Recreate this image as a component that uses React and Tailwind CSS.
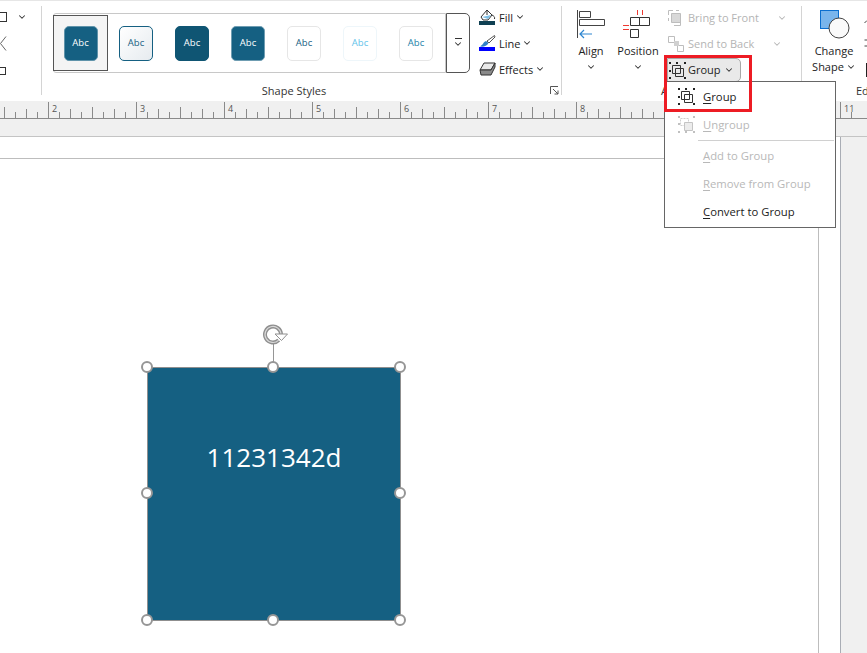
import { ChevronDown } from "lucide-react";

const styles = [
  { box: "bg-[#156082] border-[#5f93aa]", text: "text-white" },
  { box: "bg-gradient-to-br from-white to-[#e6ebef] border-[#156082]", text: "text-[#156082]" },
  { box: "bg-[#0f5573] border-[#0f5573]", text: "text-white" },
  { box: "bg-[#156082] border-[#6f9db2]", text: "text-white" },
  { box: "bg-white border-[#e6e6e6]", text: "text-[#156082]" },
  { box: "bg-white border-[#eef6fa]", text: "text-[#62c3ea]" },
  { box: "bg-white border-[#e6e6e6]", text: "text-[#1a7fa8]" },
];

const Chev = ({ className = "" }) => <ChevronDown className={`w-[10px] h-[10px] shrink-0 text-[#333] ${className}`} strokeWidth={2.5} />;

function GroupIcon() {
  return (
    <svg width="17" height="17" viewBox="0 0 17 17" fill="none" className="shrink-0">
      <path d="M3.5 3.5h8v8h-8z M6.5 6.5h8v8h-8z" stroke="#333" />
      {[[0, 0], [15, 0], [0, 15], [15, 15], [7, 0], [0, 8]].map(([x, y]) => (
        <rect key={`${x}-${y}`} x={x} y={y} width="2" height="2" fill="#222" />
      ))}
    </svg>
  );
}

function UngroupIcon() {
  return (
    <svg width="17" height="17" viewBox="0 0 17 17" fill="none" className="shrink-0">
      <path d="M2.5 2.5h8v7h-8z" stroke="#cfcfcf" strokeDasharray="2 1" />
      <path d="M6.5 6.5h8v8h-8z" fill="#ececec" stroke="#c4c4c4" />
      {[[0, 0], [15, 0], [0, 15], [15, 15], [0, 7], [7, 15]].map(([x, y]) => (
        <rect key={`${x}-${y}`} x={x} y={y} width="2" height="2" fill="#c0c0c0" />
      ))}
    </svg>
  );
}

const AlignIcon = () => (
  <svg width="30" height="29" viewBox="0 0 30 29" fill="none">
    <path d="M1.5 0v28" stroke="#444" />
    <path d="M3.5 1.5h11v6h-11z M3.5 9.5h25v6h-25z" stroke="#444" />
    <path d="M16 24H4M8 20l-4 4 4 4" stroke="#2e86d0" strokeWidth="1.2" />
  </svg>
);

const PositionIcon = () => (
  <svg width="30" height="29" viewBox="0 0 30 29" fill="none">
    <path d="M7.5 7.5h9v8h-9z M16.5 7.5h10v8h-10z M7.5 19.5h8v8h-8z" stroke="#333" />
    <path d="M14.5 0v5M19.5 0v5M0 15.5h6M0 19.5h6" stroke="#ed3a32" />
  </svg>
);

const BringIcon = () => (
  <svg width="16" height="16" viewBox="0 0 16 16" fill="none">
    <path d="M.5 5V.5H5M.5 8v3M8 .5h3" stroke="#bdbdbd" />
    <path d="M3.5 3.5h9v9h-9z" fill="#d8d8d8" stroke="#bdbdbd" />
    <path d="M12.5 6v9.5H6" stroke="#bdbdbd" />
  </svg>
);

const SendIcon = () => (
  <svg width="16" height="16" viewBox="0 0 16 16" fill="none">
    <path d="M.5.5h6v6h-6z M9.5 9.5h6v6h-6z" stroke="#bdbdbd" />
    <path d="M6 5h5v5H6z" fill="#d0d0d0" />
  </svg>
);

const FillIcon = () => (
  <svg width="17" height="16" viewBox="0 0 17 16" fill="none" className="shrink-0">
    <path d="M8 1l5 5-4 5H4L2 8z" fill="#fff" stroke="#333" />
    <path d="M8 1v5M13 6c2 1 3 2 2.500 4" stroke="#333" />
    <path d="M3 8l6 2 3-4z" fill="#7cc0e8" />
    <rect y="12" width="16" height="4" fill="#0f3f52" />
  </svg>
);

const LineIcon = () => (
  <svg width="17" height="16" viewBox="0 0 17 16" fill="none" className="shrink-0">
    <path d="M15.500 .5L8 6l2 2 6-6z" fill="#fff" stroke="#555" />
    <path d="M7 6C4 7 5 9 1 11.500c3 .5 7 0 8.500-3.500z" fill="#2f7fc8" />
    <rect y="12" width="16" height="4" fill="#0000ff" />
  </svg>
);

const EraserIcon = () => (
  <svg width="17" height="14" viewBox="0 0 17 14" fill="none" className="shrink-0">
    <path d="M5 1h11l-4 7H1z" fill="#e9e9e9" stroke="#333" />
    <path d="M1 8h11l4-7v4l-4 8H2z" fill="#8a8a8a" stroke="#333" />
  </svg>
);

const RotateIcon = () => (
  <svg width="26" height="22" viewBox="0 0 26 22" fill="none">
    <path d="M19 10.500a8 8 0 1 0-2.300 5.600" stroke="#8f8f8f" strokeWidth="4" />
    <path d="M19 10.500a8 8 0 1 0-2.300 5.600" stroke="#d8d8d8" strokeWidth="1.200" />
    <path d="M13 10h12.500l-6 6.500z" fill="#fff" stroke="#8f8f8f" />
  </svg>
);

function Ruler() {
  const ticks = Array.from({ length: 78 }, (_, i) => i);
  return (
    <div className="h-[18px] shrink-0 bg-[#f0f0f0] border-b border-[#8a8a8a] flex items-end pl-[4px] overflow-hidden">
      {ticks.map((i) => {
        // every eighth tick is an inch, counted from the 1 mark just left of the window
        const pos = (i + 4) % 8;
        const h = pos === 0 ? 16 : pos === 4 ? 11 : pos % 2 === 0 ? 9 : 6;
        const inch = pos === 0 ? 2 + Math.floor(i / 8) : null;
        return (
          <div key={i} className="w-[11px] shrink-0 relative">
            <div className="w-px bg-[#8a8a8a]" style={{ height: h }} />
            {inch && <span className="absolute left-[4px] bottom-[4px] text-[9px] leading-[11px] text-[#555]">{inch}</span>}
          </div>
        );
      })}
    </div>
  );
}

function LeftCutGroup() {
  return (
    <div className="w-[42px] h-[89px] mt-[5px] shrink-0 border-r border-[#d4d4d4] flex flex-col pt-[6px] overflow-hidden">
      <div className="flex items-center h-[10px]">
        <span className="w-[7px] h-[10px] border border-l-0 border-[#333]" />
        <Chev className="ml-[10px]" />
      </div>
      <svg className="mt-[14px]" width="7" height="15" fill="none" stroke="#666"><path d="M6 .5L.5 7.5 6 14.5" /></svg>
      <span className="mt-[16px] w-[6px] h-[8px] border border-l-0 border-[#333]" />
    </div>
  );
}

function ShapeStyles() {
  return (
    <div className="w-[520px] h-[89px] mt-[5px] shrink-0 border-r border-[#d4d4d4] flex flex-col">
      <div className="flex items-start pl-[11px] pt-[7px]">
        <div className="flex w-[393px] h-[60px] py-px border border-[#c8c8c8] rounded-l-[3px]">
          {styles.map((s, i) => (
            <div key={i} className={`shrink-0 flex items-center justify-center ${i === 0 ? "w-[55px] -ml-px border border-[#555] bg-[#f4f4f4]" : "w-[56px]"}`}>
              <div className={`w-[34px] h-[35px] rounded-[5px] border flex items-center justify-center text-[9.5px] ${s.box} ${s.text}`}>Abc</div>
            </div>
          ))}
        </div>
        <div className="w-[24px] h-[60px] border border-[#555] rounded-r-[5px] flex flex-col items-center justify-center">
          <span className="w-[7px] h-px bg-[#333]" />
          <Chev />
        </div>
        <div className="ml-[9px] -mt-[9px] h-[60px] flex flex-col text-[11px] leading-[15px] text-[#222]">
          <div className="h-[26px] shrink-0 flex items-center gap-[3px]"><FillIcon />Fill<Chev className="-ml-[1px]" /></div>
          <div className="h-[26px] shrink-0 flex items-center gap-[3px]"><LineIcon />Line<Chev className="-ml-[1px]" /></div>
          <div className="h-[26px] shrink-0 flex items-center gap-[3px]"><EraserIcon />Effects<Chev className="-ml-[1px]" /></div>
        </div>
      </div>
      <div className="mt-auto -mb-[3px] flex items-center h-[15px]">
        <span className="w-[504px] text-center text-[11px] leading-[15px] text-[#333]">Shape Styles</span>
        <svg className="ml-[4px]" width="9" height="9" fill="none" stroke="#555">
          <path d="M.5 8V.5H8M3 3l5 5M8 4.500V8H4.500" />
        </svg>
      </div>
    </div>
  );
}

function Arrange() {
  return (
    <div className="w-[240px] h-[89px] mt-[5px] shrink-0 border-r border-[#d4d4d4] flex flex-col">
      <div className="flex pt-[4px] text-[11px] leading-[16px] text-[#222]">
        <div className="w-[53px] flex flex-col items-center pl-[5px]">
          <AlignIcon />
          <span className="mt-[4px]">Align</span>
          <Chev className="mt-[3px]" />
        </div>
        <div className="w-[46px] flex flex-col items-center">
          <PositionIcon />
          <span className="mt-[4px] whitespace-nowrap">Position</span>
          <Chev className="mt-[3px]" />
        </div>
        <div className="ml-[6px] flex flex-col">
          <div className="h-[16px] pl-[1px] flex items-center gap-[4px] text-[#b4b4b4] whitespace-nowrap"><BringIcon />Bring to Front<Chev className="ml-[14px] text-[#b4b4b4]" /></div>
          <div className="mt-[10px] h-[16px] pl-[1px] flex items-center gap-[4px] text-[#b4b4b4] whitespace-nowrap"><SendIcon />Send to Back<Chev className="ml-[14px] text-[#b4b4b4]" /></div>
          <div className="mt-[6px] w-[74px] h-[24px] pl-[1px] flex items-center gap-[2px] bg-[#e9e9e9] border border-[#a8a8a8] rounded-r-[5px]">
            <GroupIcon />Group<Chev className="ml-[1px]" />
          </div>
        </div>
      </div>
      <div className="mt-auto -mb-[3px] h-[15px] text-center text-[11px] leading-[15px] text-[#333]">Arrange</div>
    </div>
  );
}

function ChangeShape() {
  return (
    <div className="w-[65px] h-[89px] mt-[5px] shrink-0 flex flex-col">
      <div className="flex">
        <div className="w-[55px] shrink-0 flex flex-col items-center pl-[9px] pt-[4px] text-[11px] leading-[16px] text-[#222]">
          <svg className="ml-[4px]" width="32" height="30" viewBox="0 0 32 30" fill="none">
            <rect x=".5" y=".5" width="18" height="18" fill="#79b5ec" stroke="#0a6ecf" />
            <circle cx="19" cy="18" r="10" fill="#fafafa" stroke="#444" />
          </svg>
          <span className="mt-[3px]">Change</span>
          <span className="flex items-center gap-[2px]">Shape<Chev /></span>
        </div>
        {/* the next group's small buttons, cut by the window edge */}
        <svg className="ml-[7px] mt-[14px] shrink-0" width="3" height="58" fill="none" stroke="#444">
          <path d="M.5 3L3 .5M.5 20h3M.5 26h3" />
          <path d="M2.500 43v14" stroke="#222" />
        </svg>
      </div>
      <div className="mt-auto -mb-[3px] h-[15px] pl-[54px] text-[11px] leading-[15px] text-[#333] whitespace-nowrap">Ed</div>
    </div>
  );
}

function GroupMenu() {
  const u = "underline underline-offset-2";
  return (
    <div className="absolute left-[664px] top-[81px] w-[172px] h-[147px] bg-white border border-[#666] text-[11.3px] leading-[15px] text-[#222]">
      <div className="h-[28px] flex items-center pl-[13px] gap-[8px]"><GroupIcon /><span><span className={u}>G</span>roup</span></div>
      <div className="h-[28px] flex items-center pl-[13px] gap-[8px] text-[#b8b8b8]"><UngroupIcon /><span><span className={u}>U</span>ngroup</span></div>
      <div className="mt-[2px] ml-[33px] mr-px h-px bg-[#d0d0d0]" />
      <div className="h-[29px] pl-[38px] flex items-center text-[#b8b8b8]"><span><span className={u}>A</span>dd to Group</span></div>
      <div className="h-[27px] pl-[38px] flex items-center text-[#b8b8b8]"><span><span className={u}>R</span>emove from Group</span></div>
      <div className="h-[29px] pl-[38px] flex items-center"><span><span className={u}>C</span>onvert to Group</span></div>
    </div>
  );
}

function Handle({ className }) {
  return <span className={`absolute w-[12px] h-[12px] -ml-[6px] -mt-[6px] rounded-full bg-white border-2 border-[#969696] ${className}`} />;
}

function Canvas() {
  return (
    <div className="flex-1 flex min-h-0">
      <div className="w-[841px] shrink-0 border-r border-[#a9adb5] bg-white pt-[21px]">
        <div className="relative w-[819px] h-full border-t border-r border-[#bdbdbd]">
          {/* the selected shape sits on the slide at its own place */}
          <div className="absolute left-[147px] top-[208px] w-[254px] h-[254px] bg-[#156082] border-[1.5px] border-[#8f8f8f] flex items-center justify-center text-white text-[26px] leading-[34px] pb-[74px]">
            11231342d
          </div>
          <span className="absolute left-[273px] top-[184px] w-px h-[24px] bg-[#969696]" />
          <div className="absolute left-[262px] top-[165px]"><RotateIcon /></div>
          <Handle className="left-[147px] top-[208px]" />
          <Handle className="left-[273px] top-[208px]" />
          <Handle className="left-[400px] top-[208px]" />
          <Handle className="left-[147px] top-[334px]" />
          <Handle className="left-[400px] top-[334px]" />
          <Handle className="left-[147px] top-[461px]" />
          <Handle className="left-[273px] top-[461px]" />
          <Handle className="left-[400px] top-[461px]" />
        </div>
      </div>
      <div className="flex-1 bg-[#f0f0f0]" />
    </div>
  );
}

export default function App() {
  return (
    <div style={{ fontFamily: '"Open Sans", sans-serif' }} className="relative w-[867px] h-[653px] bg-white overflow-hidden flex flex-col">
      <div className="h-[101px] shrink-0 bg-white border-t border-[#e6e6e6] flex">
        <LeftCutGroup />
        <ShapeStyles />
        <Arrange />
        <ChangeShape />
      </div>
      <Ruler />
      <div className="h-[18px] shrink-0 bg-[#f0f0f0] border-b border-[#c4c4c4]" />
      <Canvas />
      <GroupMenu />
      <div className="absolute left-[664px] top-[55px] w-[88px] h-[57px] border-[3px] border-[#ed1c24]" />
    </div>
  );
}
